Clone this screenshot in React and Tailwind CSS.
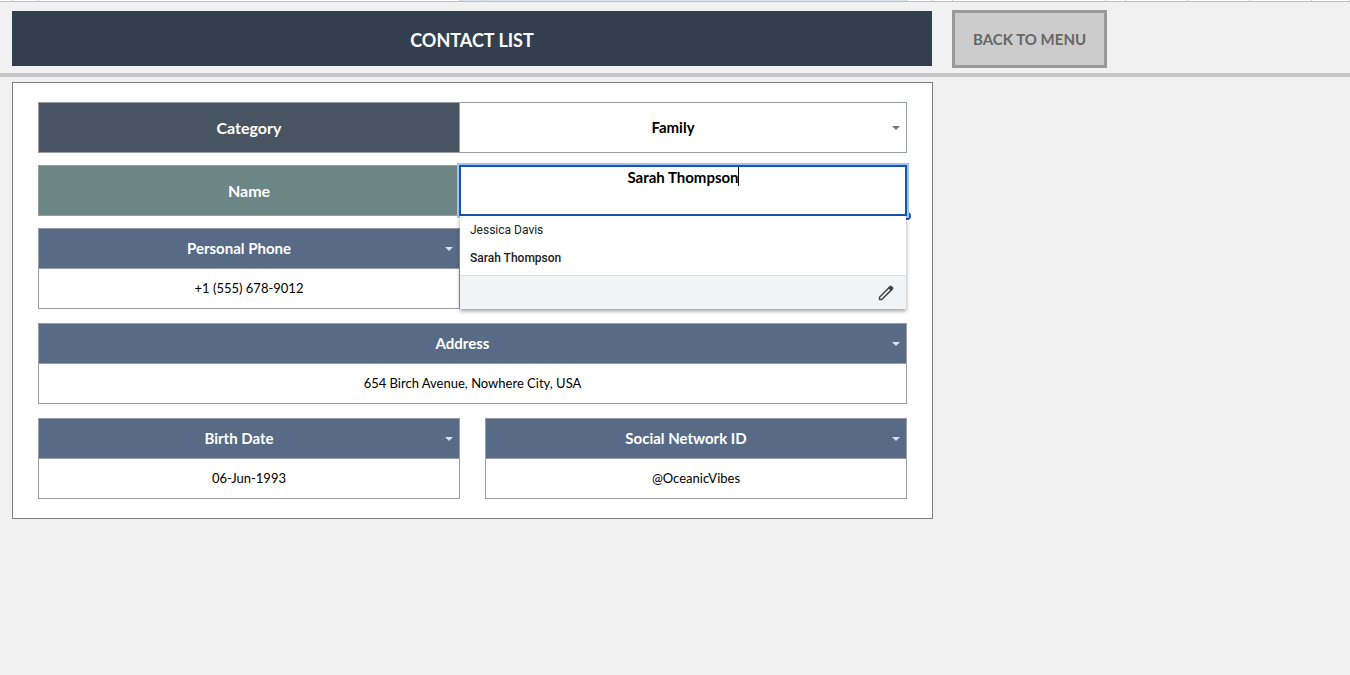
import React, { useState } from 'react';

const columnTicks = [
  { id: 'a', className: 'w-[13px]' },
  { id: 'b', className: 'w-[26px]' },
  { id: 'c', className: 'flex-[421_1_0%]' },
  { id: 'd', className: 'flex-[25_1_0%] bg-[#d9e2ee]' },
  { id: 'e', className: 'flex-[423_1_0%] bg-[#d9e2ee]' },
  { id: 'f', className: 'w-[25px]' },
  { id: 'g', className: 'w-5' },
  { id: 'h', className: 'w-[153px]' },
  { id: 'i', className: 'w-5' },
  { id: 'j', className: 'w-[62px]' },
  { id: 'k', className: 'w-[62px]' },
  { id: 'l', className: 'w-[62px]' },
  { id: 'm', className: 'w-[38px]' }
];

const suggestions = ['Jessica Davis', 'Sarah Thompson'];

const Arrow = ({ className }) => (
  <svg
    viewBox="0 0 8 4"
    className={`pointer-events-none absolute right-1.5 top-1/2 h-1 w-2 -translate-y-1/2 ${className}`}
    aria-hidden="true"
  >
    <path d="M0 0h8L4 4z" fill="currentColor" />
  </svg>
);

const PencilIcon = () => (
  <svg viewBox="0 0 20 20" className="h-5 w-5" aria-hidden="true">
    <path
      d="M3.5 16.5v-2.3L13.4 4.3l2.3 2.3-9.9 9.9z"
      fill="none"
      stroke="currentColor"
      strokeWidth="1.5"
      strokeLinejoin="round"
    />
    <path
      d="M11.8 4.9l1.9-1.9a1.4 1.4 0 0 1 2 0l1.3 1.3a1.4 1.4 0 0 1 0 2l-1.9 1.9z"
      fill="currentColor"
    />
  </svg>
);

const Field = ({ id, title, value, className = '' }) => (
  <div className={`border border-[#999da3] ${className}`}>
    <div className="relative border-b border-[#999da3] bg-[#576b86] text-white">
      <select
        id={id}
        aria-label={title}
        className="block h-[39px] w-full appearance-none pr-5 text-center text-[15px] font-bold outline-none"
      >
        <option>{title}</option>
      </select>
      <Arrow className="text-[#d5e3f5]" />
    </div>
    <output htmlFor={id} className="block h-[39px] text-center text-[13px] leading-[39px]">
      {value}
    </output>
  </div>
);

const NameInput = () => {
  const [name, setName] = useState('Sarah Thompson');

  return (
    <div className="relative">
      <span className="absolute -bottom-1 -right-1 h-2 w-2 rounded-full bg-[#1a56ab]" />
      <input
        id="name"
        value={name}
        onChange={(e) => setName(e.target.value)}
        autoComplete="off"
        className="relative block h-[51px] w-full border-2 border-[#1a56ab] bg-white pb-7 text-center text-[15px] font-bold outline-2 outline-[#a1c2fa]"
      />
      <span className="absolute left-1/2 top-0.5 ml-[55px] h-[19px] w-px bg-black" />
      <div className="absolute inset-x-px top-full z-10 bg-white font-[Roboto,sans-serif] text-xs text-[#202124] shadow-[0_2px_4px_rgba(0,0,0,0.4)]">
        <ul className="pb-[3px]">
          {suggestions.map((item) => (
            <li key={item}>
              <button
                onClick={() => setName(item)}
                className={`block h-7 w-full px-2.5 text-left ${item === name ? 'font-medium' : ''}`}
              >
                {item}
              </button>
            </li>
          ))}
        </ul>
        <div className="flex h-[34px] items-center justify-end border-t border-[#dadce0] bg-[#f1f3f4] px-2.5">
          <button aria-label="Edit" className="text-[#444746]">
            <PencilIcon />
          </button>
        </div>
      </div>
    </div>
  );
};

const App = () => {
  return (
    <div className="min-h-screen bg-[#f1f1f1] font-[Lato,sans-serif] text-black">
      <div className="flex h-0.5 border-b border-[#c0c0c0] bg-white">
        {columnTicks.map((tick) => (
          <span key={tick.id} className={`border-r border-[#c8c8c8] ${tick.className}`} />
        ))}
      </div>

      <header className="grid grid-cols-[920fr_398fr] gap-5 border-b-4 border-[#c6c6c6] pb-[5px] pl-3 pt-2">
        <h1 className="mt-px mb-0.5 bg-[#333f4f] pt-1 text-center text-lg font-bold leading-[51px] text-white">
          CONTACT LIST
        </h1>
        <div>
          <button className="block h-[58px] border-3 border-[#999999] bg-[#cccccc] px-[18px] text-[15px] font-bold text-[#666666]">
            BACK TO MENU
          </button>
        </div>
      </header>

      <main className="grid grid-cols-[921fr_398fr] gap-[19px] pl-3 pt-[5px]">
        <section className="border border-[#808080] bg-white px-[25px] py-[19px]">
          <div className="grid grid-cols-[421fr_448fr]">
            <label
              htmlFor="category"
              className="flex h-[51px] items-center justify-center border border-r-0 border-[#999da3] bg-[#495463] text-base font-bold text-white"
            >
              Category
            </label>
            <div className="relative border border-[#999da3]">
              <select
                id="category"
                className="block h-full w-full appearance-none pr-5 text-center text-[15px] font-bold outline-none"
              >
                <option>Family</option>
              </select>
              <Arrow className="text-[#757575]" />
            </div>
          </div>

          <div className="mt-3 grid grid-cols-[421fr_448fr]">
            <label
              htmlFor="name"
              className="flex h-[51px] items-center justify-center border border-r-0 border-[#999da3] bg-[#6c8585] text-base font-bold text-white"
            >
              Name
            </label>
            <NameInput />
          </div>

          <div className="mt-3 grid grid-cols-2 gap-x-[25px] gap-y-3.5">
            <Field id="phone" title="Personal Phone" value="+1 (555) 678-9012" />
            <Field
              id="address"
              title="Address"
              value="654 Birch Avenue, Nowhere City, USA"
              className="col-span-2"
            />
            <Field id="birth" title="Birth Date" value="06-Jun-1993" />
            <Field id="social" title="Social Network ID" value="@OceanicVibes" />
          </div>
        </section>
      </main>
    </div>
  );
};

export default App;
